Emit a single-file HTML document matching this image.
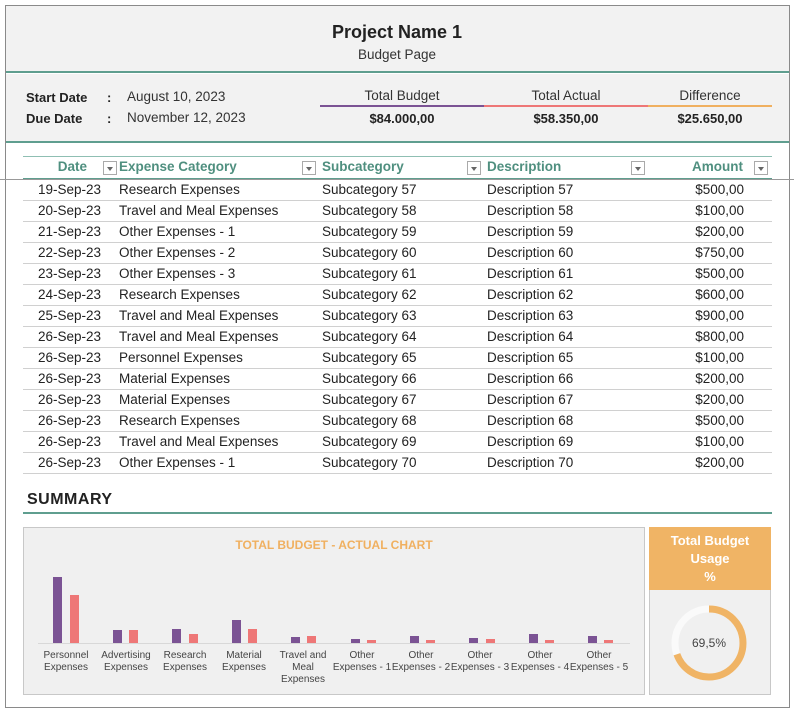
<!DOCTYPE html>
<html><head><meta charset="utf-8"><style>
*{margin:0;padding:0;box-sizing:border-box}
body{width:794px;height:713px;background:#fff;font-family:"Liberation Sans",sans-serif;position:relative;overflow:hidden;color:#222}
.abs{position:absolute}
#box{left:5px;top:5px;width:785px;height:703px;border:1px solid #8a8a8a}
#head{left:6px;top:6px;width:783px;height:66px;background:#f2f2f2}
#info{left:6px;top:74px;width:783px;height:68px;background:#f2f2f2}
.teal{background:#5f9e8f;height:2px}
.t{white-space:nowrap}
.th{color:#4f8f7f;font-weight:bold;font-size:13.5px;top:159px}
.dd{width:14px;height:14px;border:1px solid #aaa;background:#fff;top:161px}
.dd:after{content:"";position:absolute;left:3px;top:5px;border-left:3px solid transparent;border-right:3px solid transparent;border-top:4px solid #666}
.row{left:23px;width:749px;height:21px;border-bottom:1px solid #d0d0d0;font-size:13.5px;color:#222}
.row span{position:absolute;top:2px;white-space:nowrap}
.bar{position:absolute;width:9px}
.p{background:#7b5394}.r{background:#ee7777}
.lbl{position:absolute;width:60px;text-align:center;font-size:10px;color:#444;line-height:12px;top:650px}
</style></head><body>
<div class="abs" id="box"></div>
<div class="abs" id="head"></div>
<div class="abs t" style="left:0;width:794px;text-align:center;top:22px;font-size:18px;font-weight:bold">Project Name 1</div>
<div class="abs t" style="left:0;width:794px;text-align:center;top:47px;font-size:13.5px;color:#333">Budget Page</div>
<div class="abs teal" style="left:6px;top:71px;width:783px"></div>
<div class="abs" id="info"></div>
<div class="abs t" style="left:26px;top:90px;font-size:13px;font-weight:bold">Start Date</div>
<div class="abs t" style="left:26px;top:111px;font-size:13px;font-weight:bold">Due Date</div>
<div class="abs t" style="left:107px;top:90px;font-size:13px;font-weight:bold">:</div>
<div class="abs t" style="left:107px;top:111px;font-size:13px;font-weight:bold">:</div>
<div class="abs t" style="left:127px;top:89px;font-size:13.5px;color:#333">August 10, 2023</div>
<div class="abs t" style="left:127px;top:110px;font-size:13.5px;color:#333">November 12, 2023</div>
<div class="abs t" style="left:320px;width:164px;text-align:center;top:88px;font-size:13.5px;color:#333">Total Budget</div>
<div class="abs t" style="left:484px;width:164px;text-align:center;top:88px;font-size:13.5px;color:#333">Total Actual</div>
<div class="abs t" style="left:648px;width:124px;text-align:center;top:88px;font-size:13.5px;color:#333">Difference</div>
<div class="abs" style="left:320px;top:105px;width:164px;height:2px;background:#7b5394"></div>
<div class="abs" style="left:484px;top:105px;width:164px;height:2px;background:#ee7777"></div>
<div class="abs" style="left:648px;top:105px;width:124px;height:2px;background:#f0b060"></div>
<div class="abs t" style="left:320px;width:164px;text-align:center;top:111px;font-size:13px;font-weight:bold">$84.000,00</div>
<div class="abs t" style="left:484px;width:164px;text-align:center;top:111px;font-size:13px;font-weight:bold">$58.350,00</div>
<div class="abs t" style="left:648px;width:124px;text-align:center;top:111px;font-size:13px;font-weight:bold">$25.650,00</div>
<div class="abs teal" style="left:6px;top:141px;width:783px"></div>

<div class="abs" style="left:23px;top:156px;width:749px;height:1px;background:#8fbfb3"></div>
<div class="abs th t" style="left:23px;width:64px;text-align:right">Date</div>
<div class="abs dd" style="left:103px"></div>
<div class="abs th t" style="left:119px">Expense Category</div>
<div class="abs dd" style="left:302px"></div>
<div class="abs th t" style="left:322px">Subcategory</div>
<div class="abs dd" style="left:467px"></div>
<div class="abs th t" style="left:487px">Description</div>
<div class="abs dd" style="left:631px"></div>
<div class="abs th t" style="left:600px;width:143px;text-align:right">Amount</div>
<div class="abs dd" style="left:754px"></div>
<div class="abs" style="left:23px;top:178px;width:749px;height:2px;background:#5f9e8f"></div>
<div class="abs" style="left:0;top:179px;width:794px;height:1px;background:#999"></div>

<div class="abs row" style="top:180px"><span style="right:671px">19-Sep-23</span><span style="left:96px">Research Expenses</span><span style="left:299px">Subcategory 57</span><span style="left:464px">Description 57</span><span style="right:28px">$500,00</span></div>
<div class="abs row" style="top:201px"><span style="right:671px">20-Sep-23</span><span style="left:96px">Travel and Meal Expenses</span><span style="left:299px">Subcategory 58</span><span style="left:464px">Description 58</span><span style="right:28px">$100,00</span></div>
<div class="abs row" style="top:222px"><span style="right:671px">21-Sep-23</span><span style="left:96px">Other Expenses - 1</span><span style="left:299px">Subcategory 59</span><span style="left:464px">Description 59</span><span style="right:28px">$200,00</span></div>
<div class="abs row" style="top:243px"><span style="right:671px">22-Sep-23</span><span style="left:96px">Other Expenses - 2</span><span style="left:299px">Subcategory 60</span><span style="left:464px">Description 60</span><span style="right:28px">$750,00</span></div>
<div class="abs row" style="top:264px"><span style="right:671px">23-Sep-23</span><span style="left:96px">Other Expenses - 3</span><span style="left:299px">Subcategory 61</span><span style="left:464px">Description 61</span><span style="right:28px">$500,00</span></div>
<div class="abs row" style="top:285px"><span style="right:671px">24-Sep-23</span><span style="left:96px">Research Expenses</span><span style="left:299px">Subcategory 62</span><span style="left:464px">Description 62</span><span style="right:28px">$600,00</span></div>
<div class="abs row" style="top:306px"><span style="right:671px">25-Sep-23</span><span style="left:96px">Travel and Meal Expenses</span><span style="left:299px">Subcategory 63</span><span style="left:464px">Description 63</span><span style="right:28px">$900,00</span></div>
<div class="abs row" style="top:327px"><span style="right:671px">26-Sep-23</span><span style="left:96px">Travel and Meal Expenses</span><span style="left:299px">Subcategory 64</span><span style="left:464px">Description 64</span><span style="right:28px">$800,00</span></div>
<div class="abs row" style="top:348px"><span style="right:671px">26-Sep-23</span><span style="left:96px">Personnel Expenses</span><span style="left:299px">Subcategory 65</span><span style="left:464px">Description 65</span><span style="right:28px">$100,00</span></div>
<div class="abs row" style="top:369px"><span style="right:671px">26-Sep-23</span><span style="left:96px">Material Expenses</span><span style="left:299px">Subcategory 66</span><span style="left:464px">Description 66</span><span style="right:28px">$200,00</span></div>
<div class="abs row" style="top:390px"><span style="right:671px">26-Sep-23</span><span style="left:96px">Material Expenses</span><span style="left:299px">Subcategory 67</span><span style="left:464px">Description 67</span><span style="right:28px">$200,00</span></div>
<div class="abs row" style="top:411px"><span style="right:671px">26-Sep-23</span><span style="left:96px">Research Expenses</span><span style="left:299px">Subcategory 68</span><span style="left:464px">Description 68</span><span style="right:28px">$500,00</span></div>
<div class="abs row" style="top:432px"><span style="right:671px">26-Sep-23</span><span style="left:96px">Travel and Meal Expenses</span><span style="left:299px">Subcategory 69</span><span style="left:464px">Description 69</span><span style="right:28px">$100,00</span></div>
<div class="abs row" style="top:453px"><span style="right:671px">26-Sep-23</span><span style="left:96px">Other Expenses - 1</span><span style="left:299px">Subcategory 70</span><span style="left:464px">Description 70</span><span style="right:28px">$200,00</span></div>

<div class="abs t" style="left:27px;top:491px;font-size:16px;font-weight:bold;letter-spacing:0.5px">SUMMARY</div>
<div class="abs teal" style="left:23px;top:512px;width:749px"></div>

<div class="abs" style="left:23px;top:527px;width:622px;height:168px;background:#f0f0f0;border:1px solid #c8c8c8"></div>
<div class="abs t" style="left:23px;width:622px;text-align:center;top:538px;font-size:12px;font-weight:bold;color:#f0b060">TOTAL BUDGET - ACTUAL CHART</div>
<div class="abs" style="left:38px;top:643px;width:592px;height:1px;background:#d8d8d8"></div>
<div class="bar p" style="left:53px;top:577px;height:66px"></div><div class="bar r" style="left:70px;top:595px;height:48px"></div>
<div class="bar p" style="left:113px;top:630px;height:13px"></div><div class="bar r" style="left:129px;top:630px;height:13px"></div>
<div class="bar p" style="left:172px;top:629px;height:14px"></div><div class="bar r" style="left:189px;top:634px;height:9px"></div>
<div class="bar p" style="left:232px;top:620px;height:23px"></div><div class="bar r" style="left:248px;top:629px;height:14px"></div>
<div class="bar p" style="left:291px;top:637px;height:6px"></div><div class="bar r" style="left:307px;top:636px;height:7px"></div>
<div class="bar p" style="left:351px;top:639px;height:4px"></div><div class="bar r" style="left:367px;top:640px;height:3px"></div>
<div class="bar p" style="left:410px;top:636px;height:7px"></div><div class="bar r" style="left:426px;top:640px;height:3px"></div>
<div class="bar p" style="left:469px;top:638px;height:5px"></div><div class="bar r" style="left:486px;top:639px;height:4px"></div>
<div class="bar p" style="left:529px;top:634px;height:9px"></div><div class="bar r" style="left:545px;top:640px;height:3px"></div>
<div class="bar p" style="left:588px;top:636px;height:7px"></div><div class="bar r" style="left:604px;top:640px;height:3px"></div>
<div class="lbl" style="left:36px">Personnel Expenses</div>
<div class="lbl" style="left:96px">Advertising Expenses</div>
<div class="lbl" style="left:155px">Research Expenses</div>
<div class="lbl" style="left:214px">Material Expenses</div>
<div class="lbl" style="left:273px">Travel and Meal Expenses</div>
<div class="lbl" style="left:332px">Other Expenses - 1</div>
<div class="lbl" style="left:391px">Other Expenses - 2</div>
<div class="lbl" style="left:450px">Other Expenses - 3</div>
<div class="lbl" style="left:510px">Other Expenses - 4</div>
<div class="lbl" style="left:569px">Other Expenses - 5</div>

<div class="abs" style="left:649px;top:527px;width:122px;height:168px;background:#f0f0f0;border:1px solid #c8c8c8"></div>
<div class="abs" style="left:649px;top:527px;width:122px;height:63px;background:#f0b465"></div>
<div class="abs" style="left:649px;top:532px;width:122px;text-align:center;font-size:13px;font-weight:bold;color:#fff;line-height:18px">Total Budget<br>Usage<br>%</div>
<svg class="abs" style="left:669px;top:603px" width="80" height="80" viewBox="0 0 80 80">
<circle cx="40" cy="40" r="34" fill="none" stroke="#fafafa" stroke-width="7"/>
<circle cx="40" cy="40" r="34" fill="none" stroke="#f0b465" stroke-width="7" stroke-dasharray="148.5 300" transform="rotate(-90 40 40)"/>
<text x="40" y="44" text-anchor="middle" font-family="Liberation Sans" font-size="12" fill="#444">69,5%</text>
</svg>
</body></html>
